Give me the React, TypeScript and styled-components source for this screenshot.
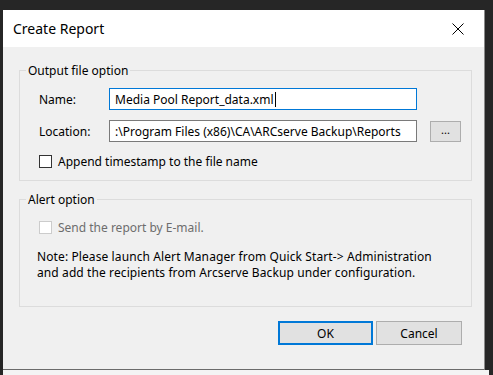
import styled, { createGlobalStyle } from 'styled-components';

const GlobalStyle = createGlobalStyle`
    html, body {
        margin: 0;
        padding: 0;
        background: #262626;
        overflow: hidden;
    }
    body {
        font-family: 'Noto Sans', 'Liberation Sans', sans-serif;
        font-size: 12px;
        color: #000;
    }
`;

const Desktop = styled.div`
    width: 493px;
    height: 375px;
    display: flex;
    flex-direction: column;
    padding: 10px 0 0 3px;
    box-sizing: border-box;
`;

const Dialog = styled.div`
    width: 482px;
    height: 360px;
    display: flex;
    flex-direction: column;
    background: #f0f0f0;
    border-right: 1px solid #8a8a8a;
    border-bottom: 1px solid #6b6b6b;
    box-sizing: border-box;
`;

const BehindStrip = styled.div`
    flex: 1;
    width: 486px;
    background: #f4f4f4;
`;

const TitleBar = styled.div`
    height: 37px;
    flex: none;
    background: #fff;
    display: flex;
    align-items: center;
    justify-content: space-between;
    padding: 0 20px 0 10px;
`;

const Title = styled.div`
    font-size: 14px;
    color: #000;
`;

const CloseIcon = styled.svg`
    width: 12px;
    height: 12px;
`;

const Body = styled.div`
    flex: 1;
    display: flex;
    flex-direction: column;
    padding: 15px 12px 0 16px;
`;

const Group = styled.fieldset<{ $height: number }>`
    margin: 0;
    height: ${(p) => p.$height}px;
    box-sizing: border-box;
    border: 1px solid #dcdcdc;
    padding: 0 0 0 19px;
    display: flex;
    flex-direction: column;
    & + & {
        margin-top: 10px;
    }
`;

const Legend = styled.legend`
    padding: 0 2px;
    margin-left: -13px;
`;

const FieldRow = styled.div`
    display: flex;
    align-items: center;
    margin-top: 9px;
    & + & {
        margin-top: 10px;
    }
`;

const Label = styled.label`
    width: 70px;
    flex: none;
`;

const TextBox = styled.div<{ $focused?: boolean }>`
    width: 308px;
    height: 22px;
    box-sizing: border-box;
    background: #fff;
    border: 1px solid ${(p) => (p.$focused ? '#0078d7' : '#7a7a7a')};
    padding: 0 5px;
    display: flex;
    align-items: center;
    white-space: nowrap;
    overflow: hidden;
`;

const Caret = styled.span`
    display: inline-block;
    width: 1px;
    height: 15px;
    background: #000;
    margin-left: 1px;
`;

const BrowseButton = styled.div`
    width: 31px;
    height: 21px;
    margin-left: 13px;
    box-sizing: border-box;
    background: #e1e1e1;
    border: 1px solid #adadad;
    display: flex;
    align-items: center;
    justify-content: center;
    font-size: 11px;
    padding-bottom: 3px;
`;

const CheckRow = styled.div<{ $disabled?: boolean }>`
    display: flex;
    align-items: center;
    margin-top: 11px;
    color: ${(p) => (p.$disabled ? '#6d6d6d' : '#000')};
`;

const Box = styled.span<{ $disabled?: boolean }>`
    width: 13px;
    height: 13px;
    box-sizing: border-box;
    background: #fff;
    border: 1px solid ${(p) => (p.$disabled ? '#cccccc' : '#333')};
    margin-right: 6px;
`;

const Note = styled.p`
    margin: 13px 0 0 -2px;
    line-height: 16px;
    letter-spacing: 0.1px;
`;

const Footer = styled.div`
    display: flex;
    justify-content: flex-end;
    gap: 3px;
    padding: 14px 10px 0 0;
`;

const Button = styled.div<{ $default?: boolean; $width: number }>`
    width: ${(p) => p.$width}px;
    height: 24px;
    box-sizing: border-box;
    background: #e1e1e1;
    border: ${(p) => (p.$default ? '2px solid #0078d7' : '1px solid #adadad')};
    display: flex;
    align-items: center;
    justify-content: center;
`;

const App = () => {
    return (
        <>
            <GlobalStyle />
            <Desktop>
                <Dialog>
                    <TitleBar>
                        <Title>Create Report</Title>
                        <CloseIcon viewBox="0 0 12 12">
                            <path d="M0.5 0.5 L11.5 11.5 M11.5 0.5 L0.5 11.5" stroke="#000" strokeWidth="1" fill="none" />
                        </CloseIcon>
                    </TitleBar>
                    <Body>
                        <Group $height={119}>
                            <Legend>Output file option</Legend>
                            <FieldRow>
                                <Label>Name:</Label>
                                <TextBox $focused>
                                    Media Pool Report_data.xml
                                    <Caret />
                                </TextBox>
                            </FieldRow>
                            <FieldRow>
                                <Label>Location:</Label>
                                <TextBox>:\Program Files (x86)\CA\ARCserve Backup\Reports</TextBox>
                                <BrowseButton>...</BrowseButton>
                            </FieldRow>
                            <CheckRow>
                                <Box />
                                Append timestamp to the file name
                            </CheckRow>
                        </Group>
                        <Group $height={116}>
                            <Legend>Alert option</Legend>
                            <CheckRow $disabled>
                                <Box $disabled />
                                Send the report by E-mail.
                            </CheckRow>
                            <Note>
                                Note: Please launch Alert Manager from Quick Start-&gt; Administration
                                <br />
                                and add the recipients from Arcserve Backup under configuration.
                            </Note>
                        </Group>
                        <Footer>
                            <Button $default $width={95}>OK</Button>
                            <Button $width={86}>Cancel</Button>
                        </Footer>
                    </Body>
                </Dialog>
                <BehindStrip />
            </Desktop>
        </>
    );
};

export default App;
